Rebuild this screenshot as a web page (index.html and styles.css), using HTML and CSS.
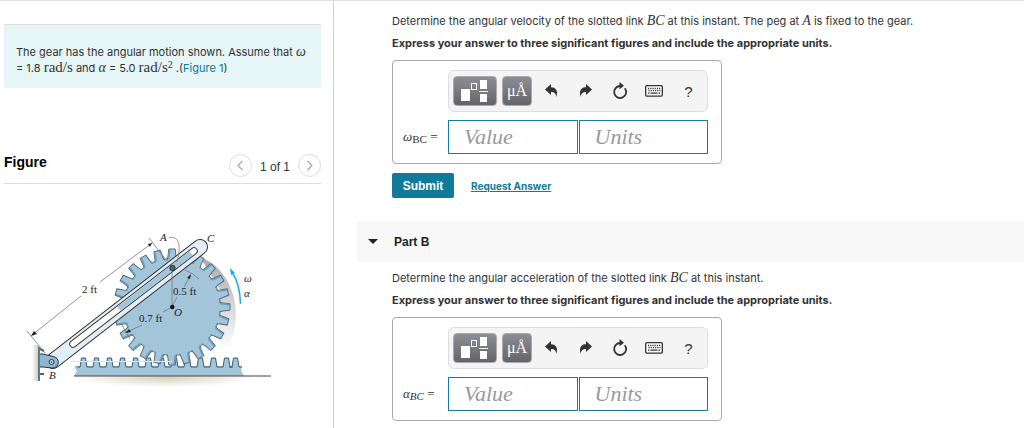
FILE: index.html
```html
<!DOCTYPE html>
<html lang="en">
<head>
<meta charset="utf-8">
<title>Slotted link and gear</title>
<link rel="stylesheet" href="styles.css">
</head>
<body>
<svg class="defs" aria-hidden="true">
  <symbol id="i-template" viewBox="0 0 28 24">
    <rect x="0" y="10" width="9" height="12" fill="#fff"/>
    <rect x="10.500" y="4.500" width="5" height="6" fill="none" stroke="#fff"/>
    <rect x="19" y="1" width="7" height="9" fill="#fff"/>
    <rect x="18" y="12" width="9" height="1" fill="#fff"/>
    <rect x="19" y="15" width="7" height="8" fill="#fff"/>
  </symbol>
  <symbol id="i-undo" viewBox="0 0 14 14">
    <path d="M0 5.500 6 0V3.200C10.500 3.200 13.500 6.500 11.300 13 11 9.500 9.500 8 6 8V11Z" fill="#333"/>
  </symbol>
  <symbol id="i-redo" viewBox="0 0 14 14">
    <path d="M13 5.500 7 0V3.200C2.500 3.200 -.5 6.500 1.700 13 2 9.500 3.500 8 7 8V11Z" fill="#333"/>
  </symbol>
  <symbol id="i-reset" viewBox="0 0 16 18">
    <path d="M8.500 4A6 6 0 1 0 12.800 6.200" fill="none" stroke="#333" stroke-width="1.800"/>
    <path d="M7.500 0 12 3.800 7.500 7.200Z" fill="#333"/>
  </symbol>
  <symbol id="i-keys" viewBox="0 0 18 12">
    <rect x=".7" y=".7" width="16.600" height="10.400" rx="1" fill="#fff" stroke="#333" stroke-width="1.300"/>
    <path d="M3 3.500H15.500M3.500 5.700H15.500" stroke="#333" stroke-width="1.300" stroke-dasharray="1.200 1"/>
    <path d="M3 8.200H4.500M5.500 8.200H12.500M13.500 8.200H15" stroke="#333" stroke-width="1.300"/>
  </symbol>
  <symbol id="i-left" viewBox="0 0 21 21">
    <path d="M12.500 6 8 10.500 12.500 15" fill="none" stroke="#aaa" stroke-width="1.300"/>
  </symbol>
  <symbol id="i-right" viewBox="0 0 21 21">
    <path d="M8.500 6 13 10.500 8.500 15" fill="none" stroke="#aaa" stroke-width="1.300"/>
  </symbol>
</svg>

<div class="page">
  <aside class="side">
    <p class="intro">The gear has the angular motion shown. Assume that <i class="math">ω</i> = 1.8 <span class="math unit">rad/s</span> and <i class="math">α</i> = 5.0 <span class="math unit">rad/s<sup>2</sup></span> .(<a class="link" href="#figure">Figure 1</a>)</p>
    <header class="figure-head" id="figure">
      <h2 class="figure-title">Figure</h2>
      <nav class="pager" aria-label="Figures">
        <button class="round" type="button" aria-label="Previous figure"><svg><use href="#i-left"/></svg></button>
        <span class="count">1 of 1</span>
        <button class="round" type="button" aria-label="Next figure"><svg><use href="#i-right"/></svg></button>
      </nav>
    </header>
    <svg class="drawing" viewBox="20 225 260 165" role="img" aria-label="Gear on a rack with slotted link BC">
      <defs>
        <path id="tooth" d="M-5 -46 -4 -51 -3.200 -58H3.200L4 -51 5 -46"/>
        <path id="shade" d="M-3.400 -48 -2.200 -57"/>
        <path id="rt" d="M0 367H3L4.500 358H8.500L10 367H13"/>
        <g id="six"><use href="#tooth"/><use href="#tooth" transform="rotate(15)"/><use href="#tooth" transform="rotate(30)"/><use href="#tooth" transform="rotate(45)"/><use href="#tooth" transform="rotate(60)"/><use href="#tooth" transform="rotate(75)"/></g>
        <g id="six-shade"><use href="#shade"/><use href="#shade" transform="rotate(15)"/><use href="#shade" transform="rotate(30)"/><use href="#shade" transform="rotate(45)"/><use href="#shade" transform="rotate(60)"/><use href="#shade" transform="rotate(75)"/></g>
        <linearGradient id="fade" x1="0" y1="0" x2="0" y2="1"><stop offset="0" stop-color="#aaa"/><stop offset="1" stop-color="#fff"/></linearGradient>
        <linearGradient id="wall" x1="1" y1="0" x2="0" y2="0"><stop offset="0" stop-color="#c9c8b4"/><stop offset="1" stop-color="#fff"/></linearGradient>
        <radialGradient id="floor"><stop offset="0" stop-color="#d5d3bd"/><stop offset="1" stop-color="#fff"/></radialGradient>
      </defs>
      <path d="M200 257C226 266 240 298 235 327 233 340 226 350 220 350V290Z" fill="url(#fade)"/>
      <rect x="32" y="345" width="7" height="36" fill="url(#wall)"/>
      <ellipse cx="165" cy="378" rx="92" ry="9" fill="url(#floor)"/>
      <path d="M74 366H242L241 370 244 376H74L77 371Z" fill="#a3c5da"/>
      <g fill="#a3c5da" stroke="#3d5b6e">
        <use href="#rt" x="77"/><use href="#rt" x="90"/><use href="#rt" x="103"/><use href="#rt" x="116"/><use href="#rt" x="129"/><use href="#rt" x="142"/><use href="#rt" x="155"/><use href="#rt" x="168"/><use href="#rt" x="181"/><use href="#rt" x="194"/><use href="#rt" x="207"/><use href="#rt" x="220"/><use href="#rt" x="229"/>
      </g>
      <path d="M74 376H271" stroke="#444"/>
      <g transform="translate(172 307)" fill="#a3c5da" stroke="#4f6d80">
        <circle r="48.500"/>
        <use href="#six"/><use href="#six" transform="rotate(90)"/><use href="#six" transform="rotate(180)"/><use href="#six" transform="rotate(270)"/>
        <g stroke="#6a9dbb" stroke-width="1.500"><use href="#six-shade"/><use href="#six-shade" transform="rotate(90)"/><use href="#six-shade" transform="rotate(180)"/><use href="#six-shade" transform="rotate(270)"/></g>
        <circle r="47.500" stroke="none"/>
      </g>
      <path d="M70 361.500H172" stroke="#e4e4e4"/>
      <g fill="none" stroke-linecap="round">
        <path d="M53 361 200 247" stroke="#333" stroke-width="16"/>
        <path d="M53 361 200 247" stroke="#e2eef6" stroke-width="14"/>
        <path d="M73 344 194 251" stroke="#333" stroke-width="7.500"/>
        <path d="M73 344 194 251" stroke="#fff" stroke-width="5.500"/>
        <path d="M119 308.600 191 253.300" stroke="#a3c5da" stroke-width="5.500" stroke-linecap="butt"/>
      </g>
      <path d="M39 354H43L53 356.500A5.500 5.500 0 0 1 52 368L43 367H39Z" fill="#8eb8d2" stroke="#333"/>
      <rect x="38" y="347" width="2" height="34" fill="#567c93"/>
      <circle cx="51.500" cy="362" r="2.500" fill="#c9dce8" stroke="#333"/>
      <circle cx="51.500" cy="362" r=".8" fill="#333"/>
      <path d="M40 349 44 351M40 374H44" stroke="#456579" stroke-width="2"/>
      <g fill="none" stroke="#777" stroke-width=".8">
        <path d="M32 335 81 296M100 282 152 243M27 331 45 353M149 238 167 261"/>
        <path d="M172 268V307M172 307 177 297M184 287 191 275M185 270Q193 273 199 279M172 307 163 312M142 325 127 332M122 325 130 339M169 237.500C178 236 182 243 177 262"/>
      </g>
      <path d="M31 336 34 331 37 334ZM152 243 148 244 150 247ZM191 274 187 278 190 279ZM125 333 129 329 131 332Z" fill="#222"/>
      <circle cx="172.500" cy="268" r="2.700" fill="#48697d" stroke="#222" stroke-width=".8"/>
      <circle cx="172.300" cy="307" r="2.200" fill="#111"/>
      <path d="M240.500 304Q240 284 232 272" fill="none" stroke="#20a9e8" stroke-width="1.500"/>
      <path d="M230 268 235 273 231 275Z" fill="#20a9e8"/>
      <g class="label">
        <text x="82" y="293">2 ft</text>
        <text x="173" y="295">0.5 ft</text>
        <text x="139" y="322">0.7 ft</text>
        <g class="var"><text x="160" y="241">A</text><text x="207" y="242">C</text><text x="174" y="316">O</text><text x="49" y="379">B</text><text x="244" y="282">ω</text><text x="244" y="297">α</text></g>
      </g>
    </svg>
  </aside>

  <main class="main">
    <section class="part">
      <p class="question">Determine the angular velocity of the slotted link <i class="math">BC</i> at this instant. The peg at <i class="math">A</i> is fixed to the gear.</p>
      <p class="hint">Express your answer to three significant figures and include the appropriate units.</p>
      <form class="answer">
        <div class="tools">
          <button class="dark wide" type="button" aria-label="Templates"><svg><use href="#i-template"/></svg></button>
          <button class="dark" type="button" aria-label="Unit symbols">μÅ</button>
          <button class="tool" type="button" aria-label="Undo"><svg class="arrow"><use href="#i-undo"/></svg></button>
          <button class="tool" type="button" aria-label="Redo"><svg class="arrow"><use href="#i-redo"/></svg></button>
          <button class="tool" type="button" aria-label="Reset"><svg class="reset"><use href="#i-reset"/></svg></button>
          <button class="tool" type="button" aria-label="Keyboard"><svg class="keys"><use href="#i-keys"/></svg></button>
          <button class="tool" type="button" aria-label="Help">?</button>
        </div>
        <label class="symbol" for="v1"><i>ω</i><sub>BC</sub> =</label>
        <div class="fields">
          <input class="field" id="v1" placeholder="Value">
          <input class="field" aria-label="Units" placeholder="Units">
        </div>
      </form>
      <div class="actions">
        <button class="submit" type="button">Submit</button>
        <a class="request" href="#request">Request Answer</a>
      </div>
    </section>

    <h2 class="part-head"><button class="toggle" type="button" aria-expanded="true"><span class="caret"></span>Part B</button></h2>

    <section class="part part-next">
      <p class="question">Determine the angular acceleration of the slotted link <i class="math">BC</i> at this instant.</p>
      <p class="hint">Express your answer to three significant figures and include the appropriate units.</p>
      <form class="answer">
        <div class="tools">
          <button class="dark wide" type="button" aria-label="Templates"><svg><use href="#i-template"/></svg></button>
          <button class="dark" type="button" aria-label="Unit symbols">μÅ</button>
          <button class="tool" type="button" aria-label="Undo"><svg class="arrow"><use href="#i-undo"/></svg></button>
          <button class="tool" type="button" aria-label="Redo"><svg class="arrow"><use href="#i-redo"/></svg></button>
          <button class="tool" type="button" aria-label="Reset"><svg class="reset"><use href="#i-reset"/></svg></button>
          <button class="tool" type="button" aria-label="Keyboard"><svg class="keys"><use href="#i-keys"/></svg></button>
          <button class="tool" type="button" aria-label="Help">?</button>
        </div>
        <label class="symbol" for="v2"><i>α</i><sub><i>BC</i></sub> =</label>
        <div class="fields">
          <input class="field" id="v2" placeholder="Value">
          <input class="field" aria-label="Units" placeholder="Units">
        </div>
      </form>
    </section>
  </main>
</div>
</body>
</html>
```
FILE: styles.css
```css
* { box-sizing: border-box; }
body { margin: 0; background: #fff; color: #333; font: 11px/16px Inter, "Liberation Sans", Arial, sans-serif; }
p, h2 { margin: 0; }
button { padding: 0; border: 0; background: none; color: inherit; font: inherit; cursor: pointer; }
.defs { display: none; }
.math, .symbol, .label { font-family: "Liberation Serif", "Times New Roman", serif; }
.math { font-size: 14px; line-height: 0; }
.unit { font-size: 15px; }

.page { display: grid; grid-template-columns: minmax(0, 334px) minmax(0, 1fr); min-height: 100vh; border-top: 1px solid #e2e2e2; }
.side { padding: 23px 12px 0 4px; border-right: 1px solid #c9d0d6; }
.intro { padding: 19px 12px 12px; border-top: 1px solid #ddd; background: #e6f5f6; }
.intro sup { font-size: 10px; line-height: 0; vertical-align: 4px; }
.link { color: #0b789b; text-decoration: none; }
.figure-head { display: flex; justify-content: space-between; align-items: center; margin-top: 64px; padding-bottom: 5px; border-bottom: 1px solid #ddd; }
.figure-title { padding-bottom: 6px; color: #000; font: bold 14px/20px "Liberation Sans", Arial, sans-serif; }
.pager { display: flex; align-items: center; gap: 8px; }
.round { width: 23px; height: 23px; border: 1px solid #ddd; border-radius: 50%; }
.round svg { display: block; width: 21px; height: 21px; }
.count { padding-top: 3px; font: 12px/16px "Liberation Sans", Arial, sans-serif; }
.drawing { display: block; width: 260px; max-width: 100%; margin: 41px 0 0 16px; }
.label { font-size: 11px; fill: #222; }
.var { font-style: italic; }

.main { padding-left: 23px; }
.part { padding: 11px 24px 12px 35px; }
.part-next { padding-top: 7px; }
.question { line-height: 18px; }
.hint { margin-top: 4px; font-weight: bold; line-height: 18px; }
.answer { display: grid; grid-template-columns: 47px minmax(0, 1fr); row-gap: 8px; align-items: center; width: 330px; max-width: 100%; margin-top: 8px; padding: 9px 13px 9px 8px; border: 1px solid #aaa; border-radius: 4px; }
.tools { grid-column: 2; display: flex; align-items: center; gap: 5px; height: 42px; padding: 0 4px; border: 1px solid #ddd; border-radius: 6px; background: #f4f4f4; }
.dark { display: grid; place-items: center; width: 30px; height: 30px; border: 1px solid #aaa; border-radius: 4px; background: linear-gradient(#8d8d96, #646467); color: #fff; font: 16px/28px "Liberation Serif", serif; }
.wide { width: 44px; }
.wide svg { width: 28px; height: 24px; }
.tool { display: grid; flex: 1; place-items: center; height: 30px; font: 15px "Liberation Sans", Arial, sans-serif; }
.arrow { width: 14px; height: 14px; }
.reset { width: 16px; height: 18px; }
.keys { width: 18px; height: 12px; }
.symbol { padding-left: 2px; font-size: 13px; white-space: nowrap; }
.symbol sub { font-size: 11px; line-height: 0; vertical-align: -2px; }
.fields { display: flex; gap: 1px; }
.field { flex: 1; min-width: 0; height: 34px; padding: 0 15px; border: 1px solid #177f9e; border-radius: 0; background: #fff; font: italic 22px "Liberation Serif", serif; }
.field::placeholder { color: #999; opacity: 1; }
.actions { display: flex; align-items: center; gap: 17px; margin-top: 9px; }
.submit { width: 62px; height: 25px; border-radius: 2px; background: #107a99; color: #fff; font: bold 12px "Liberation Sans", Arial, sans-serif; }
.request { color: #107a99; font-size: 10px; font-weight: bold; }
.part-head { margin-top: 11px; background: #f8f8f8; color: #222; font: bold 12px "Liberation Sans", Arial, sans-serif; }
.toggle { display: flex; align-items: center; gap: 16px; width: 100%; height: 41px; padding-left: 11px; text-align: left; }
.caret { border: 5px solid transparent; border-top-color: #222; border-bottom: 0; }
```
